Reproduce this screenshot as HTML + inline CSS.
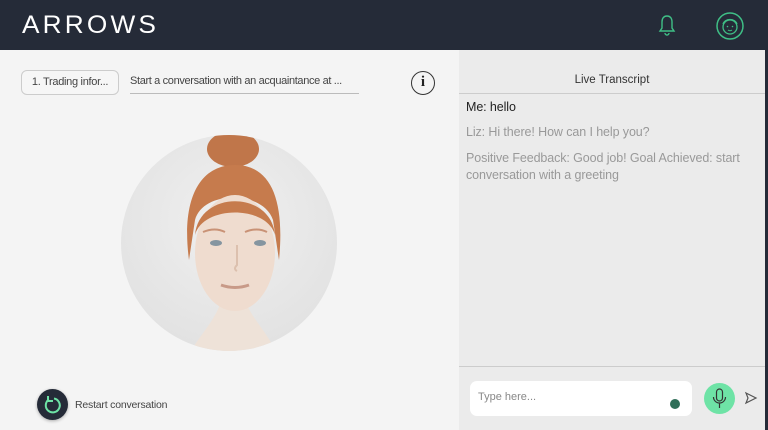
<!DOCTYPE html>
<html><head><meta charset="utf-8"><style>
*{margin:0;padding:0;box-sizing:border-box}
body{width:768px;height:430px;overflow:hidden;background:#f4f4f4;font-family:"Liberation Sans",sans-serif;position:relative}
.hdr{position:absolute;left:0;top:0;width:768px;height:50px;background:#252b38}
.logo{position:absolute;left:22px;top:11px;color:#fff;font-size:25px;font-weight:normal;letter-spacing:3px;transform:scaleX(1.05);transform-origin:left}
.right{position:absolute;left:459px;top:50px;width:306px;height:380px;background:#ebebeb}
.edge{position:absolute;left:765px;top:0;width:3px;height:430px;background:#252b38}
.pill{position:absolute;left:21px;top:70px;width:98px;height:25px;border:1px solid #ccc;border-radius:6px;background:#f6f6f6;font-size:11px;color:#444;line-height:23px;text-align:center;white-space:nowrap;letter-spacing:-.3px}
.goal{position:absolute;left:130px;top:75px;width:229px;height:19px;border-bottom:1px solid #bbb;font-size:11px;color:#444;white-space:nowrap;overflow:hidden;letter-spacing:-.35px}
.info{position:absolute;left:411px;top:71px;width:24px;height:24px;border:1.5px solid #333;border-radius:50%;text-align:center;font-weight:bold;font-size:15px;line-height:21px;color:#222;font-family:"Liberation Serif",serif}
.lt{position:absolute;left:459px;top:74px;width:306px;text-align:center;font-size:11.5px;color:#333}
.line{position:absolute;left:459px;height:1px;width:306px;background:#ccc}
.msg{position:absolute;left:466px;font-size:12.5px;color:#999;line-height:17px;width:290px;letter-spacing:-.1px}
.inp{position:absolute;left:470px;top:381px;width:222px;height:35px;background:#fff;border-radius:7px;font-size:11px;color:#888;padding:10px 0 0 8px}
.mic{position:absolute;left:704px;top:383px;width:31px;height:31px;border-radius:50%;background:#6ee3a6}
.rb{position:absolute;left:37px;top:389px;width:31px;height:31px;border-radius:50%;background:#252b38;box-shadow:0 1px 3px rgba(0,0,0,.3)}
.rt{position:absolute;left:75px;top:399px;font-size:10.5px;color:#444;letter-spacing:-.2px}
</style></head><body>
<div class="hdr"><div class="logo">ARROWS</div>
<svg style="position:absolute;left:656px;top:13px" width="22" height="24" viewBox="0 0 22 24"><path d="M11 3c-3 0-5 2-5 6v6l-2 3h14l-2-3V9c0-4-2-6-5-6zM9 20a2 2 0 0 0 4 0" fill="none" stroke="#3fbf86" stroke-width="1.4"/></svg>
<svg style="position:absolute;left:715px;top:11px" width="30" height="30" viewBox="0 0 30 30"><circle cx="15" cy="15" r="13" fill="none" stroke="#3fbf86" stroke-width="1.5"/><circle cx="15" cy="16" r="7" fill="none" stroke="#3fbf86" stroke-width="1.3"/><path d="M8 13c2-6 12-6 14 0" fill="none" stroke="#3fbf86" stroke-width="1.3"/><circle cx="12.5" cy="15.5" r=".8" fill="#3fbf86"/><circle cx="17.5" cy="15.5" r=".8" fill="#3fbf86"/><path d="M13 19q2 1.5 4 0" fill="none" stroke="#3fbf86"/></svg>
</div>
<div class="right"></div><div class="edge"></div>
<div class="pill">1. Trading infor...</div>
<div class="goal">Start a conversation with an acquaintance at ...</div>
<div class="info">i</div>
<div class="lt">Live Transcript</div>
<div class="line" style="top:93px"></div>
<div class="msg" style="top:99px;color:#222">Me: hello</div>
<div class="msg" style="top:124px">Liz: Hi there! How can I help you?</div>
<div class="msg" style="top:150px">Positive Feedback: Good job! Goal Achieved: start conversation with a greeting</div>
<div class="line" style="top:366px"></div>
<svg style="position:absolute;left:121px;top:135px" width="216" height="216" viewBox="0 0 216 216">
<defs><clipPath id="c"><circle cx="108" cy="108" r="108"/></clipPath>
<radialGradient id="bg" cx=".5" cy=".4" r=".6"><stop offset="0" stop-color="#f0f0f0"/><stop offset="1" stop-color="#e2e2e2"/></radialGradient></defs>
<g clip-path="url(#c)">
<rect width="216" height="216" fill="url(#bg)"/>
<path d="M70 216c15-25 30-35 35-70h14c5 35 25 45 35 70z" fill="#eee2d8"/>
<ellipse cx="112" cy="14" rx="26" ry="18" fill="#c0764a"/>
<path d="M68 125c-8-60 10-95 46-95s50 35 44 95l-6-40c-10-30-70-30-78 0z" fill="#c67b4d"/>
<ellipse cx="114" cy="118" rx="40" ry="58" fill="#efdccf"/>
<path d="M74 100c4-45 76-45 80 0c-8-30-72-30-80 0z" fill="#c67b4d"/>
<path d="M82 97q12-5 22 0M124 97q12-5 22 0" stroke="#c99276" stroke-width="2" fill="none"/>
<ellipse cx="95" cy="108" rx="6" ry="3" fill="#8595a0"/>
<ellipse cx="139" cy="108" rx="6" ry="3" fill="#8595a0"/>
<path d="M116 110v20q-4 4 0 6" stroke="#dcc0ae" stroke-width="2" fill="none"/>
<path d="M100 150q14 5 28 0" stroke="#c89a88" stroke-width="3" fill="none"/>
</g></svg>
<div class="rb"><svg width="31" height="31" viewBox="0 0 31 31"><path d="M12 10.5a7 7 0 1 0 5-1" fill="none" stroke="#6ee3a6" stroke-width="2"/><path d="M11 7v5h5" fill="none" stroke="#6ee3a6" stroke-width="2"/></svg></div>
<div class="rt">Restart conversation</div>
<div class="inp">Type here...<span style="position:absolute;left:200px;top:18px;width:10px;height:10px;border-radius:50%;background:#2f6e58"></span></div>
<div class="mic"><svg width="31" height="31" viewBox="0 0 31 31"><rect x="12.5" y="6" width="6" height="12" rx="3" fill="none" stroke="#333" stroke-width="1.2"/><path d="M9.5 14a6 6 0 0 0 12 0M15.5 20v5" fill="none" stroke="#333" stroke-width="1.2"/></svg></div>
<svg style="position:absolute;left:744px;top:391px" width="14" height="14" viewBox="0 0 14 14"><path d="M2 2l10 5-10 5 2-5z" fill="none" stroke="#555" stroke-width="1.2"/></svg>
</body></html>
